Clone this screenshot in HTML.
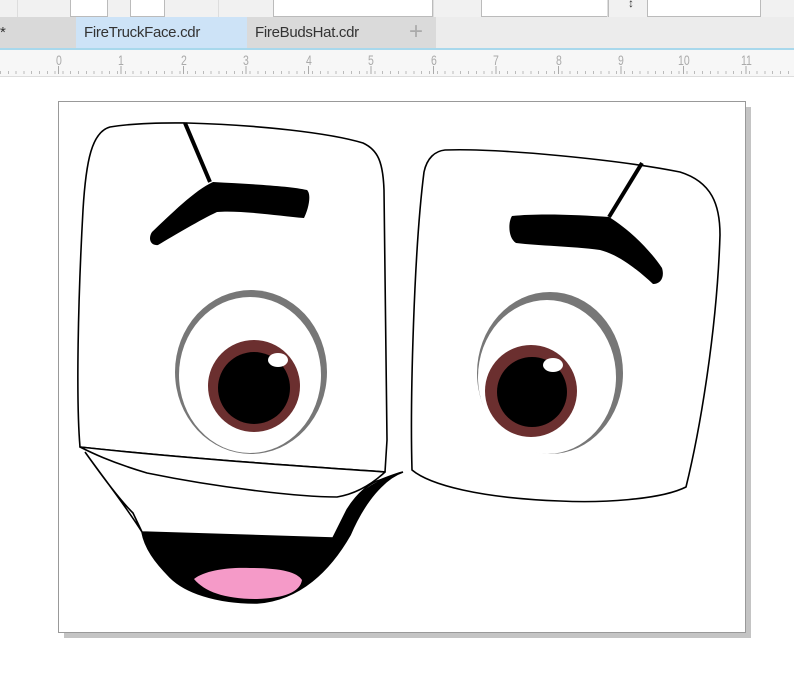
<!DOCTYPE html>
<html><head><meta charset="utf-8"><style>
html,body{margin:0;padding:0;width:794px;height:699px;overflow:hidden;background:#fff;font-family:"Liberation Sans",sans-serif}
.tb{position:absolute;left:0;top:0;width:794px;height:17px;background:#f1f1f1;border-bottom:1px solid #e0e0e0}
.box{position:absolute;top:-2px;height:17px;border:1px solid #bbb;background:#fff}
.tabs{position:absolute;left:0;top:17px;width:794px;height:31px;background:#ececec;border-bottom:2px solid #a8d8ec}
.tab{position:absolute;top:0;height:31px;font-size:15px;line-height:31px;color:#333;padding-left:8px;box-sizing:border-box;letter-spacing:-0.3px}
.ruler{position:absolute;left:0;top:50px;width:794px;height:26px;background:#f7f7f7;border-bottom:1px solid #ddd}
.n{position:absolute;top:2px;font-size:14px;color:#aaa;transform:scaleX(0.75);transform-origin:left}
</style></head><body>
<div class="tb">
<div class="box" style="left:70px;width:36px"></div>
<div class="box" style="left:130px;width:33px"></div>
<div class="box" style="left:273px;width:158px"></div>
<div class="box" style="left:481px;width:126px"></div>
<div style="position:absolute;left:628px;top:-4px;font-size:12px;color:#333">↕</div>
<div class="box" style="left:647px;width:112px"></div>
<div style="position:absolute;left:17px;top:0;width:1px;height:17px;background:#ddd"></div>
<div style="position:absolute;left:218px;top:0;width:1px;height:17px;background:#ddd"></div>
<div style="position:absolute;left:433px;top:0;width:1px;height:17px;background:#ddd"></div>
<div style="position:absolute;left:607px;top:0;width:1px;height:17px;background:#ddd"></div>
</div>
<div class="tabs">
<div class="tab" style="left:0;width:76px;background:#d9d9d9;padding-left:0">*</div>
<div class="tab" style="left:76px;width:171px;background:#cde3f7">FireTruckFace.cdr</div>
<div class="tab" style="left:247px;width:189px;background:#dadada">FireBudsHat.cdr<span style="position:absolute;left:162px;top:-1px;font-size:24px;color:#aaa">+</span></div>
</div>
<div class="ruler">
<div class="n" style="left:56px">0</div><div class="n" style="left:118px">1</div><div class="n" style="left:181px">2</div><div class="n" style="left:243px">3</div><div class="n" style="left:306px">4</div><div class="n" style="left:368px">5</div><div class="n" style="left:431px">6</div><div class="n" style="left:493px">7</div><div class="n" style="left:556px">8</div><div class="n" style="left:618px">9</div><div class="n" style="left:678px">10</div><div class="n" style="left:741px">11</div>
<div style="position:absolute;left:0;top:21px;width:794px;height:3px;background:repeating-linear-gradient(90deg,#bbb 0 1px,transparent 1px 7.8px)"></div>
<div style="position:absolute;left:58px;top:16px;width:740px;height:8px;background:repeating-linear-gradient(90deg,#aaa 0 1px,transparent 1px 62.5px)"></div>
</div>
<div style="position:absolute;left:64px;top:107px;width:687px;height:531px;background:#c4c4c4"></div>
<div style="position:absolute;left:58px;top:101px;width:686px;height:530px;background:#fff;border:1px solid #999"></div>
<svg width="794" height="699" style="position:absolute;left:0;top:0">
<g fill="#fff" stroke="#000" stroke-width="1.6" stroke-linejoin="round">
<path d="M110,127 C140,122 180,123 187,123 C260,125 330,133 363,143 C378,150 383,162 384,190 L387,440 L385,472 C330,468 200,460 80,447 C76,400 78,300 83,210 C86,160 92,132 110,127 Z"/>
<path d="M80,447 C90,452 110,462 147,473 C220,488 300,497 337,497 C355,494 370,486 385,472 C330,468 200,460 80,447 Z"/>
<path d="M445,150 C500,148 620,160 680,172 C712,182 720,205 720,235 C717,330 700,430 686,487 C660,500 600,503 560,501 C480,498 430,485 412,470 C410,400 414,250 424,172 C427,158 435,151 445,150 Z"/>
</g>
<path d="M85,452 C105,480 120,500 133,513 L142,532 L333,538 L347,510 C358,492 372,482 380,480 C390,476 398,473 403,472 C385,478 365,500 350,535 C330,570 300,600 257,603 C215,603 185,592 170,577 C155,562 145,548 142,532 C125,505 105,480 85,452 Z" fill="#fff" stroke="#000" stroke-width="1.6"/>
<path d="M142,532 L333,538 L347,510 C358,492 375,479 403,472 C385,478 365,500 350,535 C330,570 300,600 257,603 C215,603 185,592 170,577 C155,562 145,548 142,532 Z" fill="#000"/>
<path d="M194,579 C205,570 230,567 250,568 C280,568 297,572 302,580 C300,592 285,598 257,599 C225,599 205,592 194,579 Z" fill="#f59ac8"/>
<path d="M185,123 L210,182" stroke="#000" stroke-width="4"/>
<path d="M642,163 L609,217" stroke="#000" stroke-width="4"/>
<path d="M152,232 C170,215 195,190 213,182 C250,184 290,186 307,190 C312,195 308,210 304,218 C280,216 240,210 217,212 C200,220 175,235 158,245 C150,246 148,238 152,232 Z" fill="#000"/>
<path d="M512,216 C540,213 580,215 609,217 C630,230 650,250 662,268 C665,278 660,284 653,284 C640,272 620,255 600,250 C570,246 540,246 516,243 C508,238 508,222 512,216 Z" fill="#000"/>
<ellipse cx="251" cy="372" rx="76" ry="82" fill="#777"/>
<ellipse cx="250" cy="375" rx="71" ry="78" fill="#fff"/>
<circle cx="254" cy="386" r="46" fill="#6b2f2f"/>
<circle cx="254" cy="388" r="36" fill="#000"/>
<ellipse cx="278" cy="360" rx="10" ry="7" fill="#fff"/>
<ellipse cx="550" cy="373" rx="73" ry="81" fill="#777"/>
<ellipse cx="547" cy="377" rx="69" ry="77" fill="#fff"/>
<circle cx="531" cy="391" r="46" fill="#6b2f2f"/>
<circle cx="532" cy="392" r="35" fill="#000"/>
<ellipse cx="553" cy="365" rx="10" ry="7" fill="#fff"/>
</svg>
</body></html>
